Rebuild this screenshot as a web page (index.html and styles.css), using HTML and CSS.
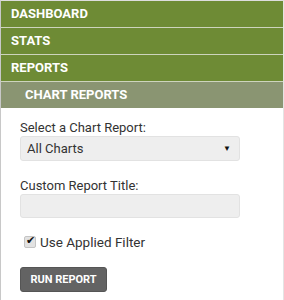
FILE: index.html
```html
<!DOCTYPE html>
<html lang="en">
<head>
    <meta charset="UTF-8">
    <meta name="viewport" content="width=device-width, initial-scale=1.0">
    <title>Chart Reports</title>
    <link rel="stylesheet" href="styles.css">
</head>
<body>
    <div class="panel">
        <ul class="nav">
            <li class="nav-item">Dashboard</li>
            <li class="nav-item">Stats</li>
            <li class="nav-item">Reports</li>
            <li class="nav-item sub">Chart Reports</li>
        </ul>

        <form class="report-form">
            <label for="chartReport">Select a Chart Report:</label>
            <div class="select-wrap">
                <select id="chartReport" name="chartReport">
                    <option>All Charts</option>
                </select>
            </div>

            <label for="reportTitle" class="title-label">Custom Report Title:</label>
            <input type="text" id="reportTitle" name="reportTitle">

            <div class="check-row">
                <input type="checkbox" id="useFilter" name="useFilter" checked>
                <label for="useFilter">Use Applied Filter</label>
            </div>

            <input type="button" class="run-btn" value="Run Report">
        </form>
    </div>
</body>
</html>
```

FILE: styles.css
```css
body {
    font-family: Roboto, "Liberation Sans", Arial, sans-serif;
    margin: 0;
    padding: 0;
    background-color: #fff;
}

.panel {
    width: 282px;
    height: 299px;
    border-top: 1px solid #ddd;
    border-left: 1px solid #c8c8c8;
    border-right: 1px solid #e4e4e4;
}

.nav {
    list-style: none;
    margin: 0;
    padding: 0;
}

.nav-item {
    height: 26px;
    line-height: 26px;
    padding-left: 10px;
    background-color: #6e8b35;
    border-bottom: 1px solid #cdd4bd;
    color: #fff;
    font-size: 13px;
    font-weight: bold;
    text-transform: uppercase;
}

.nav-item.sub {
    padding-left: 24px;
    background-color: #8a9572;
    border-bottom: none;
}

.report-form {
    padding: 12px 0 0 19px;
}

label {
    display: block;
    font-size: 13px;
    line-height: 15px;
    color: #333;
    margin-bottom: 1px;
}

.title-label {
    margin-top: 17px;
}

.select-wrap {
    position: relative;
    width: 220px;
}

.select-wrap::after {
    content: "\25BC";
    position: absolute;
    right: 9px;
    top: 8px;
    font-size: 8px;
    color: #111;
    pointer-events: none;
}

select,
input[type="text"] {
    display: block;
    width: 220px;
    height: 25px;
    box-sizing: border-box;
    background-color: #eee;
    border: 1px solid #e2e2e2;
    border-radius: 3px;
    font-family: inherit;
    font-size: 13px;
    color: #333;
    padding: 0 6px;
    appearance: none;
    outline: none;
}

input[type="text"] {
    height: 24px;
}

.check-row {
    display: flex;
    align-items: center;
    margin-top: 16px;
    height: 16px;
}

.check-row label {
    font-size: 13.5px;
    margin: 0 0 0 4px;
    color: #333;
}

input[type="checkbox"] {
    appearance: none;
    width: 12px;
    height: 12px;
    margin: 0 0 0 4px;
    border: 1px solid #c4c4c4;
    border-radius: 2px;
    background-color: #e2e2e2;
    position: relative;
}

input[type="checkbox"]:checked::after {
    content: "\2714";
    position: absolute;
    left: 1px;
    top: -3px;
    font-size: 11px;
    color: #111;
}

.run-btn {
    display: block;
    margin-top: 17px;
    width: 87px;
    height: 25px;
    background-color: #636363;
    color: #fff;
    border: 1px solid #555;
    border-radius: 3px;
    font-family: inherit;
    font-size: 11px;
    font-weight: bold;
    text-transform: uppercase;
    cursor: pointer;
}
```
